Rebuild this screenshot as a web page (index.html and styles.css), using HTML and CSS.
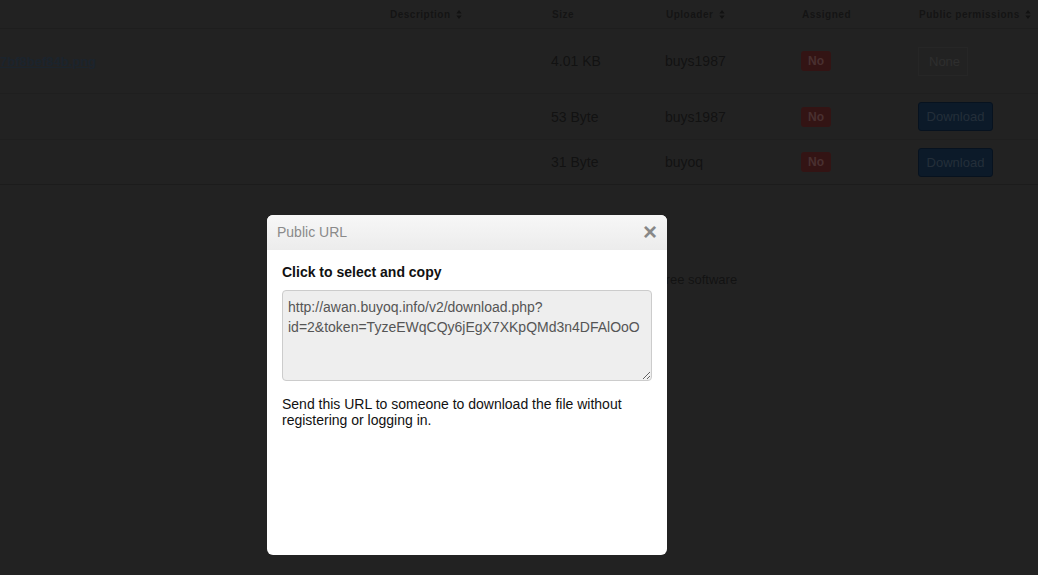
FILE: index.html
```html
<!DOCTYPE html>
<html lang="en">
<head>
    <meta charset="UTF-8">
    <meta name="viewport" content="width=device-width, initial-scale=1.0">
    <title>Files</title>
    <link rel="stylesheet" href="styles.css">
</head>
<body>
<div class="page">
    <table class="files">
        <colgroup>
            <col class="c-name"><col class="c-desc"><col class="c-size"><col class="c-upl"><col class="c-asg"><col class="c-pub">
        </colgroup>
        <thead>
        <tr>
            <th></th>
            <th>Description <svg class="sort" viewBox="0 0 6 10"><path d="M0 4 3 0 6 4Z M0 6 3 10 6 6Z"/></svg></th>
            <th>Size</th>
            <th>Uploader <svg class="sort" viewBox="0 0 6 10"><path d="M0 4 3 0 6 4Z M0 6 3 10 6 6Z"/></svg></th>
            <th>Assigned</th>
            <th>Public permissions <svg class="sort" viewBox="0 0 6 10"><path d="M0 4 3 0 6 4Z M0 6 3 10 6 6Z"/></svg></th>
        </tr>
        </thead>
        <tbody>
        <tr class="tall">
            <td><a class="file" href="#">7bf8bef84b.png</a></td>
            <td></td>
            <td>4.01 KB</td>
            <td>buys1987</td>
            <td><span class="badge">No</span></td>
            <td><span class="none">None</span></td>
        </tr>
        <tr class="r2">
            <td></td>
            <td></td>
            <td>53 Byte</td>
            <td>buys1987</td>
            <td><span class="badge">No</span></td>
            <td><button class="btn">Download</button></td>
        </tr>
        <tr class="r3">
            <td></td>
            <td></td>
            <td>31 Byte</td>
            <td>buyoq</td>
            <td><span class="badge">No</span></td>
            <td><button class="btn">Download</button></td>
        </tr>
        </tbody>
    </table>

    <p class="footer">Awan v2 file sharing &middot; Provided by ProjectSend &middot; released as free software</p>
</div>

<div class="backdrop">
    <div class="modal">
        <div class="modal-header">
            <span class="modal-title">Public URL</span>
            <span class="close">&times;</span>
        </div>
        <div class="modal-body">
            <div class="label">Click to select and copy</div>
            <textarea class="url" readonly>http://awan.buyoq.info/v2/download.php?id=2&amp;token=TyzeEWqCQy6jEgX7XKpQMd3n4DFAlOoO</textarea>
            <p class="note">Send this URL to someone to download the file without registering or logging in.</p>
        </div>
    </div>
</div>
</body>
</html>
```

FILE: styles.css
```css
body { margin: 0; font-family: "Liberation Sans", Arial, sans-serif; background-color: #3a3a3a; color: #1f1f1f; }
.page { width: 1038px; }

.files { width: 1038px; border-collapse: collapse; table-layout: fixed; }
.c-name { width: 382px; }
.c-desc { width: 162px; }
.c-size { width: 114px; }
.c-upl { width: 136px; }
.c-asg { width: 117px; }
.c-pub { width: 127px; }
.files th {
    height: 28px;
    padding: 0 8px;
    text-align: left;
    font-size: 10px;
    font-weight: bold;
    letter-spacing: 0.5px;
    color: #222;
    border-bottom: 1px solid #333;
    white-space: nowrap;
}
.files td { padding: 0 7px; font-size: 14px; color: #1e1e1e; vertical-align: middle; border-bottom: 1px solid #343434; }
.files td:first-child { padding-left: 0; }
.files tr.tall td { height: 64px; }
.files tr.r2 td { height: 45px; }
.files tr.r3 td { height: 44px; border-bottom-color: #303030; }
.sort { width: 6px; height: 9px; fill: #1e1e1e; vertical-align: -1px; margin-left: 2px; }

.file { color: #2e3c4b; font-size: 13px; font-weight: bold; text-decoration: underline; }
.badge {
    display: inline-block;
    width: 30px;
    height: 20px;
    line-height: 20px;
    text-align: center;
    border-radius: 3px;
    background: #562222;
    color: #7a5050;
    font-size: 12px;
    font-weight: bold;
}
.none {
    display: inline-block;
    width: 50px;
    height: 29px;
    line-height: 28px;
    box-sizing: border-box;
    padding-left: 10px;
    border: 1px solid #404040;
    font-size: 13px;
    color: #4d4d4d;
}
.btn {
    width: 75px;
    height: 29px;
    padding: 0;
    border: 1px solid #0d1f35;
    border-radius: 3px;
    background: #142c45;
    color: #3c4e60;
    font-family: "Liberation Sans", Arial, sans-serif;
    font-size: 13px;
}

.footer { margin: 87px 0 0; text-align: center; padding-left: 8px; font-size: 13px; color: #1f1f1f; }

/* modal */
.backdrop {
    position: fixed;
    top: 0; left: 0; right: 0; bottom: 0;
    background: rgba(0, 0, 0, 0.4);
    padding: 215px 0 0 267px;
}
.modal { width: 400px; height: 340px; background: #fff; border-radius: 6px; overflow: hidden; }
.modal-header {
    height: 35px;
    display: flex;
    align-items: center;
    justify-content: space-between;
    padding: 0 10px;
    background: linear-gradient(#f7f7f7, #ececec);
}
.modal-title { font-size: 14px; color: #8a8a8a; margin-top: -1px; }
.close { font-size: 24px; font-weight: bold; color: #888; line-height: 20px; margin-top: -2px; }
.modal-body { padding: 14px 15px; }
.label { font-size: 14px; font-weight: bold; color: #111; line-height: 16px; }
.url {
    display: block;
    box-sizing: border-box;
    width: 370px;
    height: 91px;
    margin-top: 10px;
    padding: 6px 5px;
    border: 1px solid #ccc;
    border-radius: 4px;
    background: #eee;
    color: #555;
    font-family: "Liberation Sans", Arial, sans-serif;
    font-size: 14px;
    line-height: 20px;
    resize: vertical;
}
.note { margin: 15px 0 0; font-size: 14px; line-height: 16px; color: #111; }
```
